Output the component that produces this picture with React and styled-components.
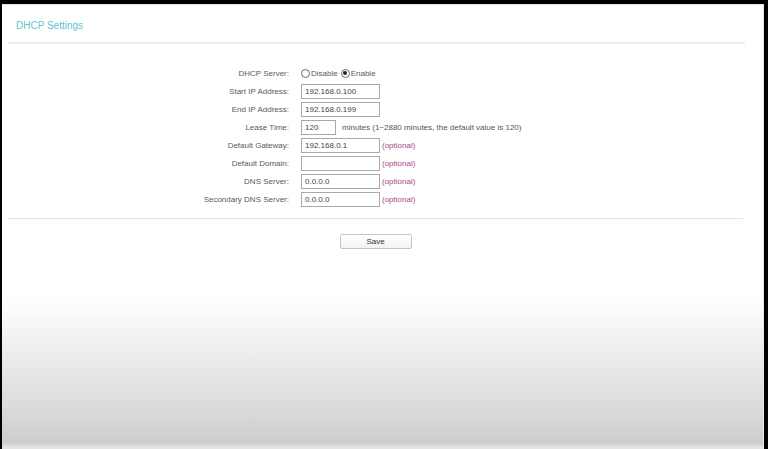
import { Fragment } from 'react';
import styled, { createGlobalStyle } from 'styled-components';

const GlobalStyle = createGlobalStyle`
  html, body {
    margin: 0;
    padding: 0;
    background: #000;
  }
  body {
    font-family: "Liberation Sans", Arial, sans-serif;
  }
`;

const Frame = styled.div`
  box-sizing: border-box;
  width: 768px;
  height: 449px;
  border-top: 4px solid #000;
  border-left: 2px solid #000;
  border-right: 4px solid #000;
  overflow: hidden;
`;

const Screen = styled.main`
  box-sizing: border-box;
  height: 100%;
  border-top: 1px solid #e4e4e4;
  border-right: 1px solid #e8e8e8;
  background: linear-gradient(to bottom, #fff 0, #fff 292px, #f1f1f1 335px, #dcdcdc 400px, #cdcdcd 438px, #e4e4e4 442px);
  display: flex;
  flex-direction: column;
`;

const Header = styled.header`
  height: 39px;
  box-sizing: border-box;
  padding: 4px 0 0 8px;
  margin: 0 18px 0 6px;
  display: flex;
  align-items: center;
  font-size: 10px;
  color: #63c4cd;
  border-bottom: 2px solid #ececec;
`;

const Form = styled.div`
  display: grid;
  grid-template-columns: 287px 1fr;
  column-gap: 12px;
  grid-auto-rows: 18px;
  padding-top: 20px;
  padding-bottom: 10px;
  font-size: 8px;
  color: #555;
`;

const Label = styled.div`
  display: flex;
  align-items: center;
  justify-content: flex-end;
  color: #5a5a5a;
`;

const Field = styled.div`
  display: flex;
  align-items: center;
  gap: ${p => p.$gap ?? 3}px;
`;

const Input = styled.div`
  box-sizing: border-box;
  width: ${p => p.$w || 79}px;
  height: 15px;
  border: 1px solid #a9a9a9;
  background: #fff;
  padding-left: 3px;
  display: flex;
  align-items: center;
  font-size: 8px;
  color: #444;
`;

const Note = styled.span`
  color: ${p => (p.$optional ? '#b04883' : '#555')};
  margin-left: ${p => p.$gap || 0}px;
`;

const Radio = styled.span`
  display: inline-flex;
  align-items: center;
  gap: 1px;
  margin-right: 2px;
  color: #5a5a5a;

  i {
    box-sizing: border-box;
    width: 9px;
    height: 9px;
    border-radius: 50%;
    border: 1px solid #666;
    background: #fff;
    display: inline-flex;
    align-items: center;
    justify-content: center;
  }

  i::after {
    content: '';
    width: 4px;
    height: 4px;
    border-radius: 50%;
    background: ${p => (p.$checked ? '#222' : 'transparent')};
  }
`;

const Divider = styled.div`
  height: 1px;
  background: #e3e3e3;
  margin: 0 20px 0 6px;
`;

const Actions = styled.div`
  display: flex;
  justify-content: center;
  padding-top: 15px;
  padding-right: 14px;
`;

const Button = styled.button`
  box-sizing: border-box;
  width: 72px;
  height: 15px;
  border: 1px solid #c4c4c4;
  border-radius: 2px;
  background: linear-gradient(to bottom, #fff, #f2f2f2);
  font-family: "Liberation Sans", Arial, sans-serif;
  font-size: 8px;
  color: #333;
  padding: 0;
`;

const rows = [
  { label: 'Start IP Address:', value: '192.168.0.100' },
  { label: 'End IP Address:', value: '192.168.0.199' },
];

const optionalRows = [
  { label: 'Default Gateway:', value: '192.168.0.1' },
  { label: 'Default Domain:', value: '' },
  { label: 'DNS Server:', value: '0.0.0.0' },
  { label: 'Secondary DNS Server:', value: '0.0.0.0' },
];

export default function App() {
  return (
    <>
      <GlobalStyle />
      <Frame>
        <Screen>
          <Header>DHCP Settings</Header>
          <Form>
            <Label>DHCP Server:</Label>
            <Field $gap={1}>
              <Radio><i />Disable</Radio>
              <Radio $checked><i />Enable</Radio>
            </Field>
            {rows.map(r => (
              <Fragment key={r.label}>
                <Label>{r.label}</Label>
                <Field><Input>{r.value}</Input></Field>
              </Fragment>
            ))}
            <Label>Lease Time:</Label>
            <Field>
              <Input $w={35}>120</Input>
              <Note $gap={3}>minutes (1~2880 minutes, the default value is 120)</Note>
            </Field>
            {optionalRows.map(r => (
              <Fragment key={r.label}>
                <Label>{r.label}</Label>
                <Field $gap={2}>
                  <Input>{r.value}</Input>
                  <Note $optional>(optional)</Note>
                </Field>
              </Fragment>
            ))}
          </Form>
          <Divider />
          <Actions>
            <Button>Save</Button>
          </Actions>
        </Screen>
      </Frame>
    </>
  );
}
